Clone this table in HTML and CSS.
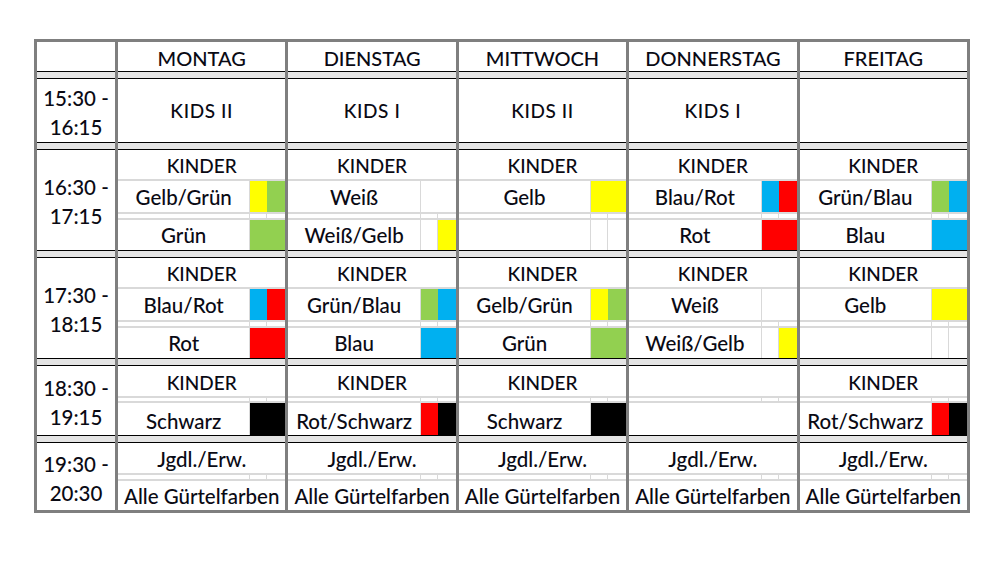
FILE: index.html
```html
<!DOCTYPE html>
<html lang="de">
<head>
<meta charset="utf-8">
<title>Trainingsplan</title>
<link rel="stylesheet" href="styles.css">
</head>
<body>
<div class="page">
  <div class="plan">
    <!-- header -->
    <div class="cell"></div>
    <div class="cell hd">MONTAG</div>
    <div class="cell hd">DIENSTAG</div>
    <div class="cell hd">MITTWOCH</div>
    <div class="cell hd">DONNERSTAG</div>
    <div class="cell hd">FREITAG</div>

    <div class="sep"></div><div class="sep"></div><div class="sep"></div><div class="sep"></div><div class="sep"></div><div class="sep"></div>

    <!-- 15:30 -->
    <div class="cell time"><span>15:30 -</span><span>16:15</span></div>
    <div class="cell kids">KIDS II</div>
    <div class="cell kids">KIDS I</div>
    <div class="cell kids">KIDS II</div>
    <div class="cell kids">KIDS I</div>
    <div class="cell kids"></div>

    <div class="sep"></div><div class="sep"></div><div class="sep"></div><div class="sep"></div><div class="sep"></div><div class="sep"></div>

    <!-- 16:30 -->
    <div class="cell time"><span>16:30 -</span><span>17:15</span></div>
    <div class="cell day k2">
      <div class="lbl">KINDER</div>
      <div class="txt">Gelb/Grün</div><div class="sw y"></div><div class="sw g"></div>
      <div class="sp r"></div><div class="sp r"></div><div class="sp"></div>
      <div class="txt">Grün</div><div class="sw g full"></div>
    </div>
    <div class="cell day k2">
      <div class="lbl">KINDER</div>
      <div class="txt">Weiß</div><div class="sw full"></div>
      <div class="sp r"></div><div class="sp r"></div><div class="sp"></div>
      <div class="txt">Weiß/Gelb</div><div class="sw r"></div><div class="sw y"></div>
    </div>
    <div class="cell day k2">
      <div class="lbl">KINDER</div>
      <div class="txt">Gelb</div><div class="sw y full"></div>
      <div class="sp r"></div><div class="sp r"></div><div class="sp"></div>
      <div class="txt"></div><div class="sw r"></div><div class="sw"></div>
    </div>
    <div class="cell day k2">
      <div class="lbl">KINDER</div>
      <div class="txt">Blau/Rot</div><div class="sw b"></div><div class="sw rd"></div>
      <div class="sp r"></div><div class="sp r"></div><div class="sp"></div>
      <div class="txt">Rot</div><div class="sw rd full"></div>
    </div>
    <div class="cell day k2">
      <div class="lbl">KINDER</div>
      <div class="txt">Grün/Blau</div><div class="sw g"></div><div class="sw b"></div>
      <div class="sp r"></div><div class="sp r"></div><div class="sp"></div>
      <div class="txt">Blau</div><div class="sw b full"></div>
    </div>

    <div class="sep"></div><div class="sep"></div><div class="sep"></div><div class="sep"></div><div class="sep"></div><div class="sep"></div>

    <!-- 17:30 -->
    <div class="cell time"><span>17:30 -</span><span>18:15</span></div>
    <div class="cell day k2">
      <div class="lbl">KINDER</div>
      <div class="txt">Blau/Rot</div><div class="sw b"></div><div class="sw rd"></div>
      <div class="sp r"></div><div class="sp r"></div><div class="sp"></div>
      <div class="txt">Rot</div><div class="sw rd full"></div>
    </div>
    <div class="cell day k2">
      <div class="lbl">KINDER</div>
      <div class="txt">Grün/Blau</div><div class="sw g"></div><div class="sw b"></div>
      <div class="sp r"></div><div class="sp r"></div><div class="sp"></div>
      <div class="txt">Blau</div><div class="sw b full"></div>
    </div>
    <div class="cell day k2">
      <div class="lbl">KINDER</div>
      <div class="txt">Gelb/Grün</div><div class="sw y"></div><div class="sw g"></div>
      <div class="sp r"></div><div class="sp r"></div><div class="sp"></div>
      <div class="txt">Grün</div><div class="sw g full"></div>
    </div>
    <div class="cell day k2">
      <div class="lbl">KINDER</div>
      <div class="txt">Weiß</div><div class="sw full"></div>
      <div class="sp r"></div><div class="sp r"></div><div class="sp"></div>
      <div class="txt">Weiß/Gelb</div><div class="sw r"></div><div class="sw y"></div>
    </div>
    <div class="cell day k2">
      <div class="lbl">KINDER</div>
      <div class="txt">Gelb</div><div class="sw y full"></div>
      <div class="sp r"></div><div class="sp r"></div><div class="sp"></div>
      <div class="txt"></div><div class="sw r"></div><div class="sw"></div>
    </div>

    <div class="sep"></div><div class="sep"></div><div class="sep"></div><div class="sep"></div><div class="sep"></div><div class="sep"></div>

    <!-- 18:30 -->
    <div class="cell time"><span>18:30 -</span><span>19:15</span></div>
    <div class="cell day k1">
      <div class="lbl">KINDER</div>
      <div class="sp r"></div><div class="sp r"></div><div class="sp"></div>
      <div class="txt">Schwarz</div><div class="sw k full"></div>
    </div>
    <div class="cell day k1">
      <div class="lbl">KINDER</div>
      <div class="sp r"></div><div class="sp r"></div><div class="sp"></div>
      <div class="txt">Rot/Schwarz</div><div class="sw rd"></div><div class="sw k"></div>
    </div>
    <div class="cell day k1">
      <div class="lbl">KINDER</div>
      <div class="sp r"></div><div class="sp r"></div><div class="sp"></div>
      <div class="txt">Schwarz</div><div class="sw k full"></div>
    </div>
    <div class="cell day k1">
      <div class="lbl"></div>
      <div class="sp r"></div><div class="sp r"></div><div class="sp"></div>
      <div class="wide"></div>
    </div>
    <div class="cell day k1">
      <div class="lbl">KINDER</div>
      <div class="sp r"></div><div class="sp r"></div><div class="sp"></div>
      <div class="txt">Rot/Schwarz</div><div class="sw rd"></div><div class="sw k"></div>
    </div>

    <div class="sep"></div><div class="sep"></div><div class="sep"></div><div class="sep"></div><div class="sep"></div><div class="sep"></div>

    <!-- 19:30 -->
    <div class="cell time"><span>19:30 -</span><span>20:30</span></div>
    <div class="cell day jg">
      <div class="lbl mix">Jgdl./Erw.</div>
      <div class="sp r"></div><div class="sp r"></div><div class="sp"></div>
      <div class="wide">Alle Gürtelfarben</div>
    </div>
    <div class="cell day jg">
      <div class="lbl mix">Jgdl./Erw.</div>
      <div class="sp r"></div><div class="sp r"></div><div class="sp"></div>
      <div class="wide">Alle Gürtelfarben</div>
    </div>
    <div class="cell day jg">
      <div class="lbl mix">Jgdl./Erw.</div>
      <div class="sp r"></div><div class="sp r"></div><div class="sp"></div>
      <div class="wide">Alle Gürtelfarben</div>
    </div>
    <div class="cell day jg">
      <div class="lbl mix">Jgdl./Erw.</div>
      <div class="sp r"></div><div class="sp r"></div><div class="sp"></div>
      <div class="wide">Alle Gürtelfarben</div>
    </div>
    <div class="cell day jg">
      <div class="lbl mix">Jgdl./Erw.</div>
      <div class="sp r"></div><div class="sp r"></div><div class="sp"></div>
      <div class="wide">Alle Gürtelfarben</div>
    </div>
  </div>
</div>
</body>
</html>
```

FILE: styles.css
```css
html, body {
  margin: 0;
  padding: 0;
  background: #ffffff;
}

body {
  font-family: Lato, "Liberation Sans", sans-serif;
  font-weight: 500;
  color: #0a0a14;
}

.page {
  padding: 39px 0 0 34px;
}

.plan {
  display: grid;
  width: 930px;
  grid-template-columns: 78px repeat(5, 1fr);
  grid-template-rows: 29px 8px 63px 8px 100px 8px 100px 8px 69px 8px 67px;
  column-gap: 3px;
  border: 3px solid #7f7f7f;
  background: #7f7f7f;
}

.cell {
  background: #ffffff;
  min-width: 0;
}

.sep {
  background: #e4e4e4;
  border-top: 1px solid #000000;
  border-bottom: 1px solid #000000;
}

.hd,
.kids {
  display: flex;
  align-items: center;
  justify-content: center;
  font-size: 19px;
}

.hd {
  font-size: 20px;
  padding-top: 2px;
}

.kids {
  letter-spacing: 0.6px;
}

.time {
  display: flex;
  flex-direction: column;
  align-items: center;
  justify-content: center;
  font-size: 20.5px;
  line-height: 29px;
  padding-top: 4px;
}

.day {
  display: grid;
  grid-template-columns: 1fr 17px 18px;
}

.k2 {
  grid-template-rows: 31px 31px 8px 30px;
}

.k1 {
  grid-template-rows: 32px 5px 32px;
}

.jg {
  grid-template-rows: 32px 6px 29px;
}

.lbl {
  grid-column: 1 / -1;
  display: flex;
  align-items: center;
  justify-content: center;
  font-size: 19px;
  border-bottom: 2px solid #d9d9d9;
  padding-top: 2px;
}

.lbl.mix {
  font-size: 20.5px;
}

.txt,
.wide {
  display: flex;
  align-items: center;
  justify-content: center;
  font-size: 20.5px;
  white-space: nowrap;
}

.txt {
  border-right: 1px solid #d9d9d9;
}

.k1 .txt {
  padding-top: 3px;
}

.wide {
  grid-column: 1 / -1;
}

.sw.full {
  grid-column: span 2;
}

.sw.r {
  border-right: 1px solid #d9d9d9;
}

.sp {
  border-bottom: 2px solid #d9d9d9;
}

.k2 .sp {
  border-top: 2px solid #d9d9d9;
}

.sp.r {
  border-right: 1px solid #d9d9d9;
}

.y { background: #ffff00; }
.g { background: #92d050; }
.b { background: #00b0f0; }
.rd { background: #ff0000; }
.k { background: #000000; }
```
